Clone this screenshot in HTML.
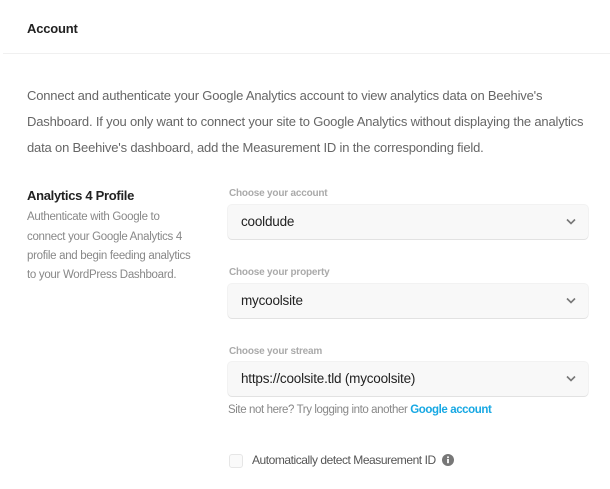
<!DOCTYPE html>
<html><head><meta charset="utf-8"><style>
*{margin:0;padding:0;box-sizing:border-box}
body{width:610px;height:489px;background:#fff;font-family:"Liberation Sans",sans-serif;position:relative;overflow:hidden;color:#333}
.a{position:absolute;white-space:nowrap}
.hdr{left:27px;top:21px;font-size:13px;font-weight:bold;color:#222;letter-spacing:-0.2px}
.line{position:absolute;left:3px;right:0;top:53px;height:1px;background:#f0f0f0}
.p{left:27px;font-size:13px;color:#666;letter-spacing:-0.18px}
.t{left:27px;top:188px;font-size:13px;font-weight:bold;color:#222;letter-spacing:-0.3px}
.d{left:27px;font-size:11.5px;color:#888;letter-spacing:-0.3px}
.lab{left:229px;font-size:10px;font-weight:bold;color:#aaa;letter-spacing:-0.2px}
.sel{position:absolute;left:228px;width:360px;height:34px;background:#f8f8f8;border-radius:4px;box-shadow:0 1px 0 #e2e2e2,0 0 0 1px #f2f2f2}
.sel span{position:absolute;left:13px;top:9px;font-size:13.5px;color:#222;letter-spacing:-0.2px}
.sel svg{position:absolute;right:12px;top:13px}
.hint{left:228px;top:404px;font-size:11.5px;color:#888;letter-spacing:-0.4px}
.hint b{color:#17a8e3;font-weight:bold}
.cb{position:absolute;left:229px;top:454px;width:14px;height:14px;border:1px solid #e6e6e6;border-radius:3px;background:#fafafa}
.cl{left:252px;top:453px;font-size:12px;color:#555;letter-spacing:-0.45px}
</style></head><body>
<div class="a hdr">Account</div>
<div class="line"></div>
<div class="a p" style="top:88px">Connect and authenticate your Google Analytics account to view analytics data on Beehive's</div>
<div class="a p" style="top:114px">Dashboard. If you only want to connect your site to Google Analytics without displaying the analytics</div>
<div class="a p" style="top:140px">data on Beehive's dashboard, add the Measurement ID in the corresponding field.</div>
<div class="a t">Analytics 4 Profile</div>
<div class="a d" style="top:211px">Authenticate with Google to</div>
<div class="a d" style="top:231px">connect your Google Analytics 4</div>
<div class="a d" style="top:250px">profile and begin feeding analytics</div>
<div class="a d" style="top:269px">to your WordPress Dashboard.</div>
<div class="a lab" style="top:188px">Choose your account</div>
<div class="sel" style="top:205px"><span>cooldude</span><svg width="10" height="7" viewBox="0 0 10 7"><path d="M1 1.5l4 4 4-4" fill="none" stroke="#777" stroke-width="1.6"/></svg></div>
<div class="a lab" style="top:267px">Choose your property</div>
<div class="sel" style="top:284px"><span>mycoolsite</span><svg width="10" height="7" viewBox="0 0 10 7"><path d="M1 1.5l4 4 4-4" fill="none" stroke="#777" stroke-width="1.6"/></svg></div>
<div class="a lab" style="top:346px">Choose your stream</div>
<div class="sel" style="top:362px"><span>https://coolsite.tld (mycoolsite)</span><svg width="10" height="7" viewBox="0 0 10 7"><path d="M1 1.5l4 4 4-4" fill="none" stroke="#777" stroke-width="1.6"/></svg></div>
<div class="a hint">Site not here? Try logging into another <b>Google account</b></div>
<div class="cb"></div>
<div class="a cl">Automatically detect Measurement ID</div>
<svg class="a" style="left:442px;top:454px" width="12" height="12" viewBox="0 0 12 12"><circle cx="6" cy="6" r="6" fill="#777"/><rect x="5.1" y="5" width="1.8" height="4.2" fill="#fff"/><circle cx="6" cy="3.3" r="1" fill="#fff"/></svg>
</body></html>
